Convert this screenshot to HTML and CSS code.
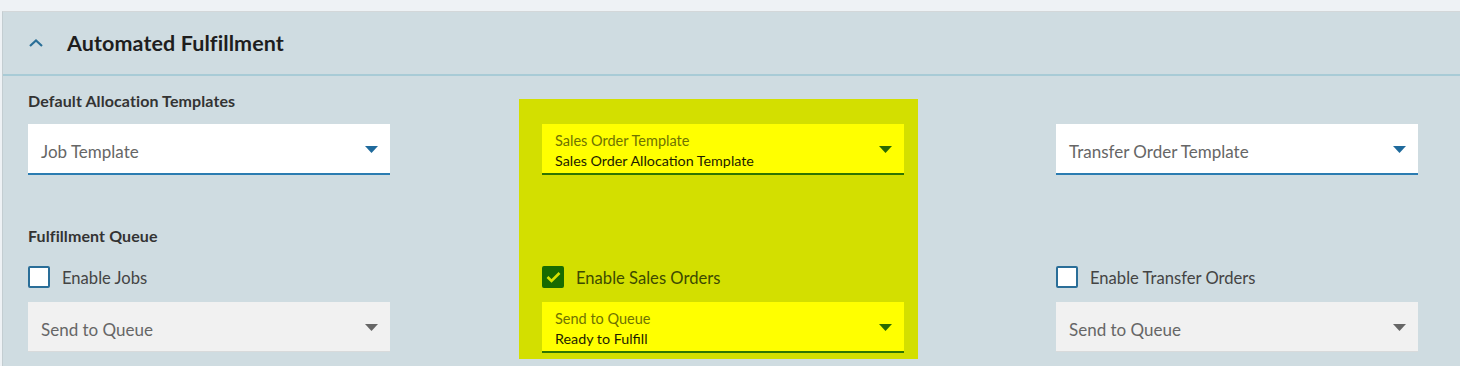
FILE: index.html
```html
<!DOCTYPE html>
<html lang="en">
<head>
    <meta charset="UTF-8">
    <meta name="viewport" content="width=device-width, initial-scale=1.0">
    <title>Automated Fulfillment</title>
    <link rel="stylesheet" href="styles.css">
</head>
<body>
    <section class="panel">
        <header class="panel-header">
            <svg class="chevron" width="16" height="10" viewBox="0 0 16 10">
                <path d="M2 8 L8 2.5 L14 8" fill="none" stroke="#2a6f97" stroke-width="2.2"/>
            </svg>
            <h2>Automated Fulfillment</h2>
        </header>

        <div class="panel-body">
            <div class="col">
                <div class="group-title">Default Allocation Templates</div>
                <div class="select">
                    <span class="placeholder">Job Template</span>
                    <svg class="caret" width="13" height="7" viewBox="0 0 13 7"><path d="M0 0 H13 L6.5 7 Z"/></svg>
                </div>
                <div class="group-title queue-title">Fulfillment Queue</div>
                <label class="check">
                    <span class="box"></span>
                    <span>Enable Jobs</span>
                </label>
                <div class="select disabled">
                    <span class="placeholder">Send to Queue</span>
                    <svg class="caret" width="13" height="7" viewBox="0 0 13 7"><path d="M0 0 H13 L6.5 7 Z"/></svg>
                </div>
            </div>

            <div class="col highlight">
                <div class="select filled">
                    <div class="value-wrap">
                        <span class="float-label">Sales Order Template</span>
                        <span class="value">Sales Order Allocation Template</span>
                    </div>
                    <svg class="caret" width="13" height="7" viewBox="0 0 13 7"><path d="M0 0 H13 L6.5 7 Z"/></svg>
                </div>
                <div class="mid-gap"></div>
                <label class="check">
                    <span class="box checked">
                        <svg width="15" height="12" viewBox="0 0 15 12">
                            <path d="M1.5 6 L5.5 10 L13.5 2" fill="none" stroke="#d6e300" stroke-width="2.6"/>
                        </svg>
                    </span>
                    <span>Enable Sales Orders</span>
                </label>
                <div class="select filled">
                    <div class="value-wrap">
                        <span class="float-label">Send to Queue</span>
                        <span class="value">Ready to Fulfill</span>
                    </div>
                    <svg class="caret" width="13" height="7" viewBox="0 0 13 7"><path d="M0 0 H13 L6.5 7 Z"/></svg>
                </div>
            </div>

            <div class="col">
                <div class="group-title"></div>
                <div class="select">
                    <span class="placeholder">Transfer Order Template</span>
                    <svg class="caret" width="13" height="7" viewBox="0 0 13 7"><path d="M0 0 H13 L6.5 7 Z"/></svg>
                </div>
                <div class="group-title queue-title"></div>
                <label class="check">
                    <span class="box"></span>
                    <span>Enable Transfer Orders</span>
                </label>
                <div class="select disabled">
                    <span class="placeholder">Send to Queue</span>
                    <svg class="caret" width="13" height="7" viewBox="0 0 13 7"><path d="M0 0 H13 L6.5 7 Z"/></svg>
                </div>
            </div>
        </div>
    </section>
</body>
</html>
```

FILE: styles.css
```css
* {
    box-sizing: border-box;
    margin: 0;
    padding: 0;
}

body {
    background: #eef2f5;
    font-family: Lato, 'Open Sans', sans-serif;
    color: #333;
    height: 366px;
    overflow: hidden;
}

.panel {
    margin: 11px 0 0 2px;
    background: #cfdce1;
    border-top: 1px solid #d3d7d9;
    border-left: 1px solid #c3cdd1;
    min-height: 360px;
}

.panel-header {
    height: 64px;
    display: flex;
    align-items: center;
    padding-left: 25px;
    border-bottom: 2px solid #a8cbd6;
}

.chevron {
    margin-right: 23px;
    margin-top: -1px;
}

.panel-header h2 {
    font-size: 21.5px;
    font-weight: 700;
    color: #1e1e1e;
    letter-spacing: 0.1px;
}

.panel-body {
    display: grid;
    grid-template-columns: 362px 362px 362px;
    column-gap: 152px;
    padding: 14px 0 0 25px;
}

.col {
    display: flex;
    flex-direction: column;
}

.group-title {
    height: 22px;
    line-height: 22px;
    margin-bottom: 12px;
    font-size: 16px;
    font-weight: 700;
    color: #333;
    letter-spacing: 0.1px;
}

.queue-title {
    margin-top: 50px;
    margin-bottom: 19px;
}

.select {
    height: 51px;
    background: #fff;
    border-bottom: 2px solid #2b7cb1;
    display: flex;
    align-items: center;
    justify-content: space-between;
    padding: 0 12px 0 13px;
}

.placeholder {
    font-size: 17px;
    color: #666;
    padding-top: 5px;
}

.caret {
    fill: #1f6a9c;
    margin-top: 1px;
}

.select.disabled {
    height: 50px;
    background: #f1f1f1;
    border-bottom: 1px solid #d8dadb;
    margin-top: 14px;
}

.select.disabled .caret {
    fill: #666;
}

.check {
    display: flex;
    align-items: center;
    height: 22px;
    font-size: 16.6px;
    color: #444;
}

.check span:last-child {
    padding-top: 1px;
}

.box {
    width: 22px;
    height: 22px;
    border: 2px solid #2a6e98;
    border-radius: 2px;
    background: #fff;
    margin-right: 12px;
    display: flex;
    align-items: center;
    justify-content: center;
}

/* highlighted middle column */
.highlight {
    background: #d3df00;
    margin: 9px -14px 0 -23px;
    padding: 25px 14px 6px 23px;
    align-self: start;
}

.highlight .select {
    background: #ffff00;
    border-bottom-color: #2f7400;
}

.highlight .caret {
    fill: #2a6a00;
}

.highlight .check {
    color: #3d4a00;
}

.mid-gap {
    height: 91px;
}

.box.checked {
    background: #176b00;
    border-color: #176b00;
}

.value-wrap {
    display: flex;
    flex-direction: column;
    padding-top: 6px;
}

.float-label {
    font-size: 14.5px;
    color: #6f7300;
    line-height: 18px;
}

.value {
    font-size: 14.3px;
    color: #1d1d00;
    line-height: 22px;
}

.highlight .select:last-child {
    margin-top: 14px;
    height: 51px;
}
```
